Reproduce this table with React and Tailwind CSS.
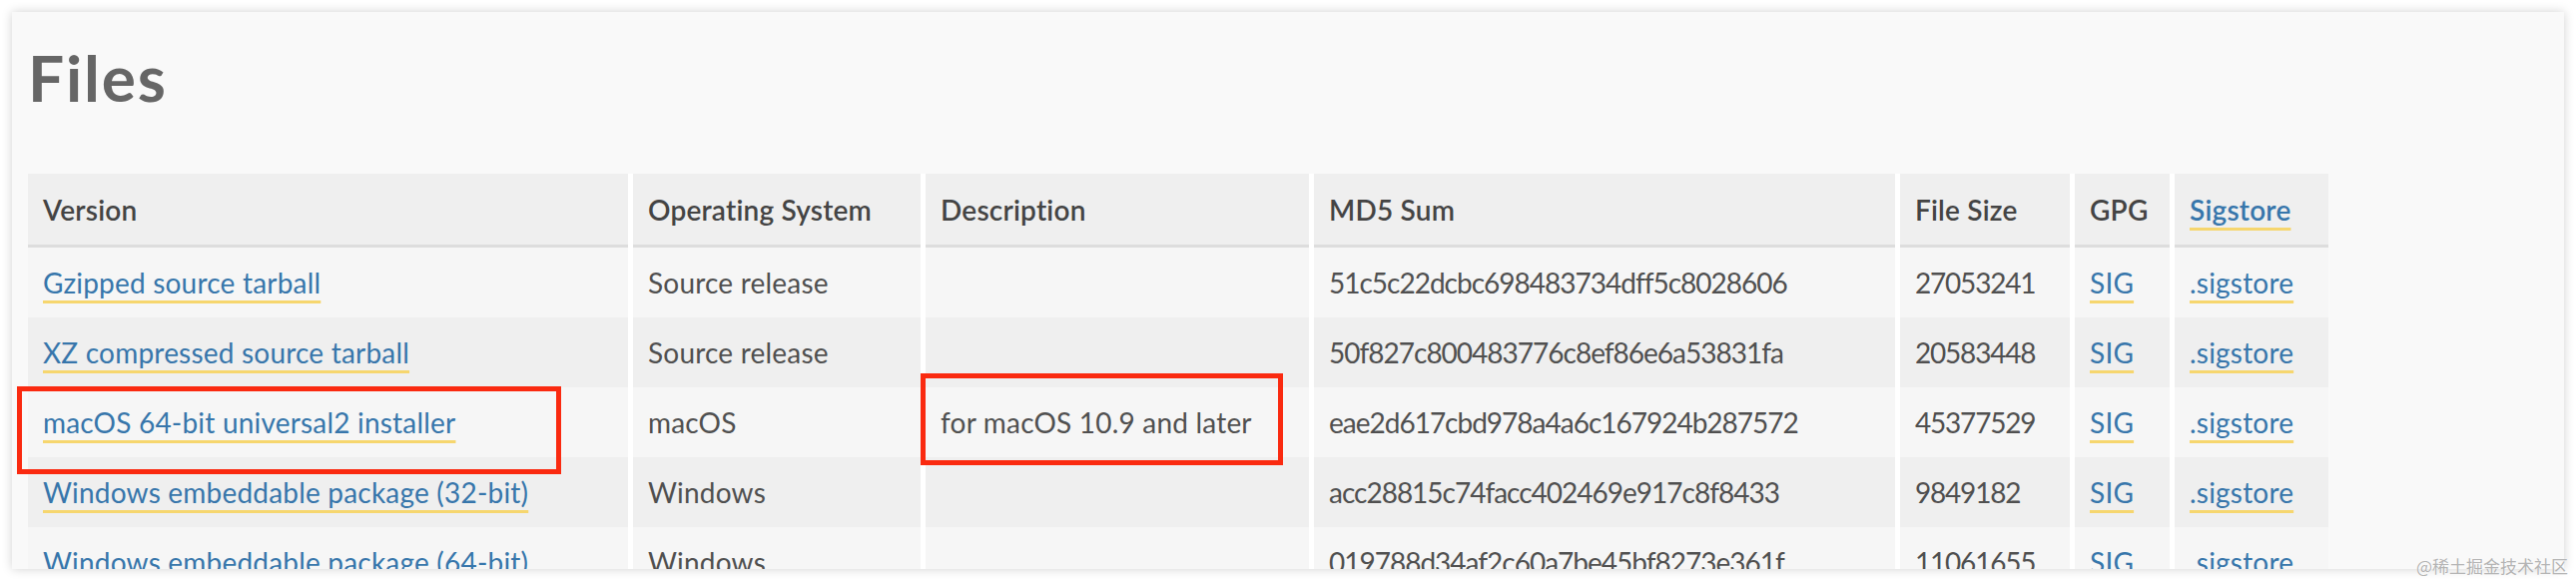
const headers = [
  { label: "Version" },
  { label: "Operating System" },
  { label: "Description" },
  { label: "MD5 Sum" },
  { label: "File Size" },
  { label: "GPG" },
  { label: "Sigstore", link: true },
];

const files = [
  ["Gzipped source tarball", "Source release", "", "51c5c22dcbc698483734dff5c8028606", "27053241"],
  ["XZ compressed source tarball", "Source release", "", "50f827c800483776c8ef86e6a53831fa", "20583448"],
  ["macOS 64-bit universal2 installer", "macOS", "for macOS 10.9 and later", "eae2d617cbd978a4a6c167924b287572", "45377529"],
  ["Windows embeddable package (32-bit)", "Windows", "", "acc28815c74facc402469e917c8f8433", "9849182"],
  ["Windows embeddable package (64-bit)", "Windows", "", "019788d34af2c60a7be45bf8273e361f", "11061655"],
];

function Link({ children }) {
  return (
    <span className="text-[#3776ab] underline decoration-[#f6d66e] decoration-3 underline-offset-[7px] [text-decoration-skip-ink:none]">
      {children}
    </span>
  );
}

export default function App() {
  return (
    <div
      className="relative w-[2580px] h-[582px] overflow-hidden bg-white p-3"
      style={{ fontFamily: "Lato, 'Noto Sans', sans-serif" }}
    >
      {/* Card */}
      <div className="w-[2556px] h-[558px] overflow-hidden bg-[#f9f9f9] shadow-[0_0_10px_rgba(0,0,0,0.18)] pl-4">
        <h1 className="mt-[34px] text-[64px] leading-none font-bold text-[#666] tracking-[1.8px]">Files</h1>

        <div className="mt-[64px] grid grid-cols-[601px_288px_384px_582px_170px_95px_154px] gap-x-[5px] bg-white w-[2304px] text-[28px] leading-none tracking-[0.2px]">
          {headers.map((h) => (
            <div
              key={h.label}
              className="h-[74px] flex items-center px-[15px] bg-[#efefef] border-b-[3px] border-[#dddddd] font-semibold text-[#444]"
            >
              {h.link ? <Link>{h.label}</Link> : h.label}
            </div>
          ))}

          {files.map((row, i) => {
            const bg = i % 2 === 0 ? "bg-[#f6f6f6]" : "bg-[#efefef]";
            return [
              <div key={`v${i}`} className={`h-[70px] flex items-center px-[15px] ${bg}`}>
                <Link>{row[0]}</Link>
              </div>,
              <div key={`o${i}`} className={`h-[70px] flex items-center px-[15px] text-[#505050] ${bg}`}>
                {row[1]}
              </div>,
              <div key={`d${i}`} className={`h-[70px] flex items-center px-[15px] text-[#505050] ${bg}`}>
                {row[2]}
              </div>,
              <div key={`m${i}`} className={`h-[70px] flex items-center px-[15px] text-[#505050] tracking-[-1px] ${bg}`}>
                {row[3]}
              </div>,
              <div key={`f${i}`} className={`h-[70px] flex items-center px-[15px] text-[#505050] tracking-[-1.2px] ${bg}`}>
                {row[4]}
              </div>,
              <div key={`g${i}`} className={`h-[70px] flex items-center px-[15px] ${bg}`}>
                <Link>SIG</Link>
              </div>,
              <div key={`s${i}`} className={`h-[70px] flex items-center px-[15px] ${bg}`}>
                <Link>.sigstore</Link>
              </div>,
            ];
          })}
        </div>
      </div>

      {/* Annotation boxes */}
      <div className="absolute left-[17px] top-[387px] w-[545px] h-[88px] border-[5px] border-[#fa2a10]" />
      <div className="absolute left-[922px] top-[374px] w-[363px] h-[92px] border-[5px] border-[#fa2a10]" />

      <div
        className="absolute right-[8px] bottom-[7px] text-[17px] leading-none text-[#b4b4b4] [text-shadow:0_0_1px_#fff]"
        style={{ fontFamily: "'Noto Sans CJK SC', sans-serif" }}
      >
        @稀土掘金技术社区
      </div>
    </div>
  );
}
